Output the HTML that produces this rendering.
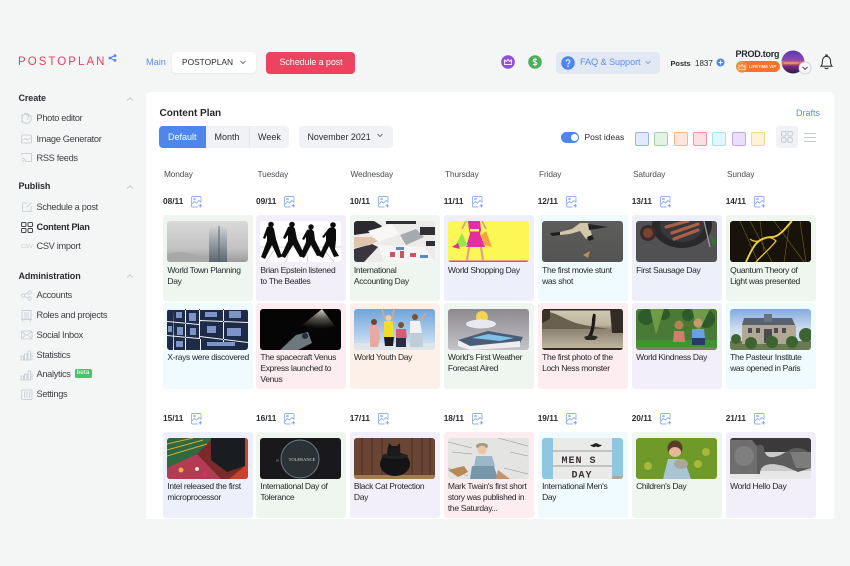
<!DOCTYPE html>
<html><head><meta charset="utf-8">
<style>
html,body{margin:0;padding:0}
body{width:850px;height:566px;background:#f4f5f5;position:relative;overflow:hidden;font-family:"Liberation Sans",sans-serif;color:#2a2c30;font-size:8.5px}
.a{position:absolute;white-space:nowrap;line-height:11px;filter:blur(.2px)}
.panel{position:absolute;left:146px;top:92px;width:688px;height:427px;background:#fff;border-radius:5px 5px 0 0}
.c{position:absolute;width:90px;height:86px;border-radius:3px}
.c svg{position:absolute;left:4px;top:6px;width:81px;height:41px;border-radius:3px;filter:blur(.35px)}
.c p{position:absolute;left:4.4px;top:49.5px;margin:0;line-height:11px;font-size:8.5px;letter-spacing:-.33px;white-space:nowrap;color:#26282c;filter:blur(.2px)}
.g{background:#eef6ef}.p{background:#f3effa}.b{background:#edf0fb}.y{background:#effbfe}.r{background:#fdedf0}.o{background:#fdf0e9}
.d{font-weight:bold;font-size:8.3px;color:#2a2c30}
.w{color:#4a4d52;font-size:8.3px;letter-spacing:-.12px}
.s{font-size:9.2px;letter-spacing:-.3px;color:#3e4146}
.h{font-size:9px;letter-spacing:-.1px;font-weight:bold;color:#2a2c30}
.i{position:absolute}
.sq{position:absolute;top:131.5px;width:12px;height:12px;border-radius:2px;border:1px solid}
</style></head><body>

<div class="a" style="left:18px;top:56px;font-size:11.5px;letter-spacing:2.05px;color:#e8405f;line-height:12px">POSTOPLAN</div>
<svg class="i" style="left:108px;top:54px" width="9" height="9" viewBox="0 0 9 9"><path d="M7 1.5 2 4l5 2.6" stroke="#4f86ec" stroke-width="1" fill="none"/><circle cx="7" cy="1.7" r="1.4" fill="#4f86ec"/><circle cx="2" cy="4" r="1.4" fill="#4f86ec"/><circle cx="7" cy="6.4" r="1.4" fill="#4f86ec"/></svg>
<div class="a" style="left:146px;top:56.5px;color:#5b8def;font-size:9.2px">Main</div>
<div class="i" style="left:172px;top:52px;width:84px;height:21px;background:#fff;border-radius:4px;box-shadow:0 1px 2px #0000000f"></div>
<div class="a" style="left:182px;top:57px;font-size:8.4px;color:#2a2c30">POSTOPLAN</div>
<svg class="i" style="left:239px;top:60px" width="8" height="5" viewBox="0 0 8 5"><path d="M1.5 1 4 3.5 6.5 1" stroke="#555" stroke-width=".8" fill="none"/></svg>
<div class="i" style="left:266px;top:51.5px;width:89px;height:22.5px;background:#ee4260;border-radius:4px"></div>
<div class="a" style="left:279.5px;top:57px;font-size:9px;letter-spacing:-.1px;color:#fff">Schedule a post</div>

<svg class="i" style="left:500.500px;top:55px" width="14" height="14" viewBox="0 0 14 14"><circle cx="7" cy="7" r="6.8" fill="#9150dc"/><path d="M3.6 5 5.300 6.500 7 4.300 8.700 6.500 10.400 5v4.600H3.600z" fill="none" stroke="#fff" stroke-width=".9"/></svg>
<svg class="i" style="left:528px;top:55px" width="14" height="14" viewBox="0 0 14 14"><circle cx="7" cy="7" r="6.800" fill="#4cb05a"/><path d="M9 4.800C8 3.800 5.200 3.900 5.200 5.500 5.200 7.300 9 6.600 9 8.500 9 10.100 6 10.200 5 9.200M7 2.800v8.400" fill="none" stroke="#fff" stroke-width=".9"/></svg>
<div class="i" style="left:556px;top:52px;width:104px;height:21.500px;background:#e3e9f4;border-radius:4px"></div>
<svg class="i" style="left:561px;top:55.500px" width="14" height="14" viewBox="0 0 14 14"><circle cx="7" cy="7" r="6.800" fill="#4f86ec"/><path d="M5.200 5.400C5.300 3.300 8.900 3.400 8.900 5.500 8.900 7 7 7 7 8.500" fill="none" stroke="#fff" stroke-width="1.100"/><circle cx="7" cy="10.300" r=".8" fill="#fff"/></svg>
<div class="a" style="left:580px;top:57px;font-size:9.200px;letter-spacing:-.1px;color:#5b8def">FAQ &amp; Support</div>
<svg class="i" style="left:644px;top:60px" width="8" height="5" viewBox="0 0 8 5"><path d="M1.500 1 4 3.500 6.500 1" stroke="#6f95e0" stroke-width=".8" fill="none"/></svg>
<div class="a" style="left:670.500px;top:57.500px;font-size:7.400px;font-weight:bold;color:#2a2c30">Posts</div>
<div class="a" style="left:695px;top:57.500px;font-size:8px;color:#2a2c30">1837</div>
<svg class="i" style="left:716px;top:58px" width="9" height="9" viewBox="0 0 9 9"><circle cx="4.500" cy="4.500" r="4" fill="#4f86ec"/><path d="M2.400 4.500h4.200M4.500 2.400v4.200" stroke="#fff" stroke-width=".9"/></svg>
<div class="a" style="left:735.500px;top:49px;font-size:9px;letter-spacing:-.25px;font-weight:bold;color:#26282c">PROD.torg</div>
<div class="i" style="left:735.500px;top:60.500px;width:44.500px;height:11.500px;background:#f4752a;border-radius:6px"></div>
<svg class="i" style="left:735.500px;top:60.500px" width="12" height="12" viewBox="0 0 12 12"><circle cx="6" cy="6" r="5.600" fill="#f98a3c"/><path d="M3 4.400 4.600 5.600 6 3.600 7.400 5.600 9 4.400V8.400H3z" fill="none" stroke="#ffe3c8" stroke-width=".8"/></svg>
<div class="a" style="left:749px;top:61px;font-size:4.200px;font-weight:bold;color:#ffe9d8;line-height:11px">LIFETIME VIP</div>
<svg class="i" style="left:781px;top:49.500px" width="24" height="24" viewBox="0 0 24 24"><defs><linearGradient id="av" x1="0" y1="0" x2="0" y2="1"><stop offset="0" stop-color="#5a37b0"/><stop offset=".42" stop-color="#9148b0"/><stop offset=".55" stop-color="#e87a5a"/><stop offset=".68" stop-color="#7a2e80"/><stop offset="1" stop-color="#2c1748"/></linearGradient></defs><circle cx="12" cy="12" r="11.500" fill="url(#av)"/><path d="M3 13h14" stroke="#fbb04a" stroke-width="1"/></svg>
<svg class="i" style="left:798px;top:61px" width="14" height="14" viewBox="0 0 14 14"><circle cx="7" cy="7" r="6" fill="#f4f5f5" stroke="#c9ced6" stroke-width=".8"/><path d="M4.600 6 7 8.400 9.400 6" stroke="#333" stroke-width=".9" fill="none"/></svg>
<svg class="i" style="left:819px;top:53px" width="15" height="18" viewBox="0 0 15 18"><path d="M2 13.200c1.200-1.200 1.400-2.200 1.400-5C3.400 5.500 5 3.400 7.500 3.400S11.600 5.500 11.600 8.200c0 2.800.2 3.800 1.400 5zM6.800 3.300V2h1.400v1.300M5.800 14.600c.4 1.400 3 1.400 3.400 0" fill="none" stroke="#26282c" stroke-width="1"/></svg>

<!-- sidebar -->
<div class="a h" style="left:18.500px;top:93px">Create</div>
<div class="a s" style="left:36.500px;top:113px">Photo editor</div>
<div class="a s" style="left:36.500px;top:133.500px">Image Generator</div>
<div class="a s" style="left:36.500px;top:153px">RSS feeds</div>
<div class="a h" style="left:18.500px;top:181px">Publish</div>
<div class="a s" style="left:36.500px;top:201.500px">Schedule a post</div>
<div class="a s" style="left:36.500px;top:221.500px;font-weight:bold;color:#2a2c30">Content Plan</div>
<div class="a s" style="left:36.500px;top:241px">CSV import</div>
<div class="a h" style="left:18.500px;top:270.500px">Administration</div>
<div class="a s" style="left:36.500px;top:290px">Accounts</div>
<div class="a s" style="left:36.500px;top:310px">Roles and projects</div>
<div class="a s" style="left:36.500px;top:329.500px">Social Inbox</div>
<div class="a s" style="left:36.500px;top:349.500px">Statistics</div>
<div class="a s" style="left:36.500px;top:369px">Analytics</div>
<div class="a" style="left:74.500px;top:369px;width:17px;height:8.500px;background:#4cc26a;border-radius:1.500px;color:#fff;font-size:6.500px;line-height:8px;text-align:center">beta</div>
<div class="a s" style="left:36.500px;top:389px">Settings</div>
<svg class="i" style="left:0;top:0" width="146" height="420" viewBox="0 0 146 420" fill="none" stroke="#c3cad3" stroke-width=".8">
<path d="M127 100.500l3-2.700 3 2.700M127 188.500l3-2.700 3 2.700M127 277.500l3-2.700 3 2.700" stroke="#bfc4ca"/>
<circle cx="26.500" cy="118.500" r="4.800"/><path d="M22 114v9M24 113l5 3-2 4"/>
<rect x="21.500" y="135" width="10" height="8" rx="1"/><path d="M22.500 140.500l2.500-2 2.500 1.500 3-2.500"/>
<path d="M21.500 155v-1.500h10v8h-5M21.500 158a4 4 0 0 1 4 4M21.500 160a2 2 0 0 1 2 2"/>
<path d="M31 206v5.500h-8.500v-8.500h5M26.500 207.500l5-5"/>
<g stroke="#44474c" stroke-width="1"><rect x="21.500" y="222.500" width="4.500" height="4" rx="1"/><rect x="28" y="222.500" width="4.500" height="4" rx="1"/><rect x="21.500" y="228.500" width="4.500" height="4" rx="1"/><rect x="28" y="228.500" width="4.500" height="4" rx="1"/></g>
<circle cx="23" cy="295.500" r="1.700"/><circle cx="29.500" cy="292.500" r="1.700"/><circle cx="29.500" cy="298.500" r="1.700"/><path d="M24.500 294.500l3.500-1.500M24.500 296.500l3.500 1.500"/>
<rect x="22" y="310.500" width="9" height="8.500"/><path d="M21 319.500h11M24 313h5M24 315h5M24 317h5M23 320l-.5 2M30 320l.5 2"/>
<rect x="21.500" y="331" width="10.500" height="8" rx="1"/><path d="M21.500 331.500l5.200 4 5.200-4M21.500 339l3.500-3.500M32 339l-3.500-3.500"/>
<path d="M21 360v-4h2.500v4zM24.500 360v-6h2.500v6zM28 360v-9h2.500v9zM32 360v-7" />
<path d="M21 380v-4h2.500v4zM24.500 380v-6h2.500v6zM28 380v-9h2.500v9zM32 380v-7"/>
<rect x="21.500" y="390" width="10.500" height="9.500" rx="1"/><path d="M24.500 391.500v6.500M27 391.500v6.500M29.700 391.500v6.500"/>
</svg>
<div class="a" style="left:21px;top:241.500px;font-size:5.800px;color:#c3cad3;line-height:10px">CSV</div>

<div class="panel"></div>
<div class="a" style="left:159.500px;top:108px;font-size:10px;font-weight:bold;color:#26282c">Content Plan</div>
<div class="a" style="left:796px;top:107.500px;font-size:9px;color:#5b8def">Drafts</div>
<div class="i" style="left:159px;top:126px;width:130px;height:21.500px;background:#f0f2f5;border-radius:4px"></div>
<div class="i" style="left:159px;top:126px;width:47px;height:21.500px;background:#4f86ec;border-radius:4px 0 0 4px"></div>
<div class="i" style="left:249px;top:126px;width:1px;height:21.500px;background:#e4e6ea"></div>
<div class="a" style="left:168px;top:131.500px;font-size:9px;color:#fff">Default</div>
<div class="a" style="left:214.500px;top:131.500px;font-size:9px">Month</div>
<div class="a" style="left:258px;top:131.500px;font-size:9px">Week</div>
<div class="i" style="left:298.500px;top:126px;width:94.500px;height:21.500px;background:#f0f2f5;border-radius:4px"></div>
<div class="a" style="left:307.500px;top:131.500px;font-size:8.900px">November 2021</div>
<svg class="i" style="left:376px;top:133px" width="8" height="5" viewBox="0 0 8 5"><path d="M1.500 1 4 3.500 6.500 1" stroke="#555" stroke-width=".8" fill="none"/></svg>
<div class="i" style="left:560.500px;top:132px;width:18.500px;height:10.500px;background:#4f86ec;border-radius:6px"></div>
<div class="i" style="left:571px;top:133.800px;width:7px;height:7px;background:#fff;border-radius:50%"></div>
<div class="a" style="left:584.500px;top:131.500px;font-size:8.500px">Post ideas</div>
<div class="sq" style="left:635px;background:#e2e9fa;border-color:#93b4f5"></div>
<div class="sq" style="left:654.300px;background:#e4f2e6;border-color:#9ed4a5"></div>
<div class="sq" style="left:674px;background:#fde7da;border-color:#f8b48a"></div>
<div class="sq" style="left:693px;background:#fcdfe4;border-color:#f593a3"></div>
<div class="sq" style="left:712.300px;background:#e0f8fe;border-color:#9fe4f8"></div>
<div class="sq" style="left:731.500px;background:#eadffa;border-color:#c7a5ef"></div>
<div class="sq" style="left:751px;background:#fdf3d8;border-color:#fad77e"></div>
<div class="i" style="left:776px;top:126px;width:22px;height:22px;background:#f0f2f5;border-radius:3px"></div>
<svg class="i" style="left:780px;top:130px" width="14" height="14" viewBox="0 0 14 14" fill="none" stroke="#c3cad3" stroke-width="1"><rect x="1.500" y="1.500" width="4.500" height="4.500" rx="1"/><rect x="7.800" y="1.500" width="4.500" height="4.500" rx="1"/><rect x="1.500" y="7.800" width="4.500" height="4.500" rx="1"/><rect x="7.800" y="7.800" width="4.500" height="4.500" rx="1"/></svg>
<svg class="i" style="left:804px;top:132px" width="12" height="11" viewBox="0 0 12 11" stroke="#c3cad3" stroke-width="1"><path d="M0 1.500h12M0 5.500h12M0 9.500h12"/></svg>

<div class="a w" style="left:164px;top:168.500px">Monday</div>
<div class="a w" style="left:257.500px;top:168.500px">Tuesday</div>
<div class="a w" style="left:350.500px;top:168.500px">Wednesday</div>
<div class="a w" style="left:445px;top:168.500px">Thursday</div>
<div class="a w" style="left:539px;top:168.500px">Friday</div>
<div class="a w" style="left:633px;top:168.500px">Saturday</div>
<div class="a w" style="left:727px;top:168.500px">Sunday</div>

<div class="a d" style="left:163px;top:196px">08/11</div>
<div class="a d" style="left:256px;top:196px">09/11</div>
<div class="a d" style="left:349.700px;top:196px">10/11</div>
<div class="a d" style="left:443.700px;top:196px">11/11</div>
<div class="a d" style="left:537.700px;top:196px">12/11</div>
<div class="a d" style="left:631.700px;top:196px">13/11</div>
<div class="a d" style="left:725.700px;top:196px">14/11</div>
<div class="a d" style="left:163px;top:413px">15/11</div>
<div class="a d" style="left:256px;top:413px">16/11</div>
<div class="a d" style="left:349.700px;top:413px">17/11</div>
<div class="a d" style="left:443.700px;top:413px">18/11</div>
<div class="a d" style="left:537.700px;top:413px">19/11</div>
<div class="a d" style="left:631.700px;top:413px">20/11</div>
<div class="a d" style="left:725.700px;top:413px">21/11</div>

<svg class="i" style="left:0;top:0" width="850" height="566" viewBox="0 0 850 566" fill="none" stroke="#8fb0f0" stroke-width=".9">
<defs><g id="ad"><path d="M6.500 11H1.500a1 1 0 0 1-1-1V1.500a1 1 0 0 1 1-1h7.500a1 1 0 0 1 1 1V6.500M1 8l2.500-2.500L5.500 7 8 4.500l2 1.800"/><circle cx="3.500" cy="3" r=".8"/><path d="M9.300 8v3.500M7.500 9.800h3.600" stroke="#6f9bee"/></g></defs>
<use href="#ad" x="191" y="196"/><use href="#ad" x="284" y="196"/><use href="#ad" x="378" y="196"/><use href="#ad" x="472" y="196"/><use href="#ad" x="566" y="196"/><use href="#ad" x="660" y="196"/><use href="#ad" x="754" y="196"/>
<use href="#ad" x="191" y="413"/><use href="#ad" x="284" y="413"/><use href="#ad" x="378" y="413"/><use href="#ad" x="472" y="413"/><use href="#ad" x="566" y="413"/><use href="#ad" x="660" y="413"/><use href="#ad" x="754" y="413"/>
</svg>

<!-- Row 1 -->
<div class="c g" style="left:163px;top:215px"><svg viewBox="0 0 81 41"><defs><linearGradient id="f1" x1="0" y1="0" x2="0" y2="1"><stop offset="0" stop-color="#d9d9d9"/><stop offset=".7" stop-color="#c0c0c0"/><stop offset="1" stop-color="#9a9a9a"/></linearGradient><linearGradient id="f2" x1="0" y1="0" x2="0" y2="1"><stop offset="0" stop-color="#d2d3d4"/><stop offset=".35" stop-color="#a4abb0"/><stop offset="1" stop-color="#5a666f"/></linearGradient></defs><rect width="81" height="41" fill="url(#f1)"/><path d="M42 8 52 5 60 8V41H42z" fill="url(#f2)"/><path d="M52 5V41" stroke="#4a555e" stroke-width=".8"/><path d="M0 33c15-5 28 1 42 5V41H0z" fill="#a8a8a8"/></svg><p>World Town Planning<br>Day</p></div>
<div class="c p" style="left:256px;top:215px"><svg viewBox="0 0 81 41"><rect width="81" height="41" fill="#fff"/><path d="M0 26h81M6 41l10-15M26 41l4-15M48 41l-2-15M74 41l-12-15" stroke="#b5b5b5" stroke-width=".6"/><g fill="#0c0c0c"><circle cx="11" cy="3.500" r="2.800"/><path d="M7 6c3-1 6-1 7 2l2 10 5 15 3 2-6 2-6-13-7 14-4-2 6-16 0-6-2 4-2-1z"/><circle cx="32" cy="3.500" r="2.800"/><path d="M28 6c3-1 6-1 7 2l2 10 7 15 2 2-6 1-7-12-8 13-4-2 7-15 0-6-3 4-2-1z"/><circle cx="51" cy="6" r="2.700"/><path d="M47 9c3-1 6-1 7 2l1 8 6 12 2 3-6 1-6-11-7 13-4-2 6-14 0-5-2 3-2-1z"/><circle cx="73" cy="4" r="2.800"/><path d="M69 7c3-1 6-1 7 2l0 10-1 9 4 7-5 1-5-11-6 12-4-2 7-15 0-6-2 3-2-1z"/></g></svg><p>Brian Epstein listened<br>to The Beatles</p></div>
<div class="c g" style="left:349.500px;top:215px"><svg viewBox="0 0 81 41"><rect width="81" height="41" fill="#ecebe9"/><path d="M0 0h20l8 5-6 6-22 3z" fill="#2a2a2e"/><path d="M0 28l18-5 6 3-14 15H0z" fill="#38363c"/><path d="M14 10l24-7 8 10-22 8z" fill="#f8f7f6"/><path d="M46 14l16-6 8 8-18 8z" fill="#a6a9ad"/><path d="M0 16h18l6 4-8 4-16 3z" fill="#e0c4b0"/><path d="M24 24l46 2 11 15H30z" fill="#f6f5f6"/><path d="M36 31h5v5h-5zM46 30h4v7h-4zM56 32h6v4h-6z" fill="#c95565"/><path d="M42 26h8v3h-8zM66 34h8v3h-8z" fill="#5a8ac0"/><path d="M32 0h30v3H32zM66 6h15v8H66zM72 20h9v5h-9z" fill="#303034"/></svg><p>International<br>Accounting Day</p></div>
<div class="c b" style="left:443.500px;top:215px"><svg viewBox="0 0 81 41"><rect width="81" height="41" fill="#fdf756"/><rect y="39.500" width="81" height="1.500" fill="#e63ca5"/><path d="M20 0h12l1 9-1 4 5 13H18l4-13-1-4z" fill="#e62da0"/><path d="M22 8h9v2.500h-9z" fill="#fff15a"/><path d="M6 27 14 12l6 13z" fill="#9be64b"/><path d="M36 24 44 26 38 10 33 14z" fill="#f4a540"/><path d="M4 26l8 2-2-6z" fill="#e62da0"/><path d="M21 26l-2 13M33 26l2 13" stroke="#d9a782" stroke-width="2.200"/><path d="M18 0l-4 8M34 0l4 8" stroke="#d9a782" stroke-width="1.800"/></svg><p>World Shopping Day</p></div>
<div class="c y" style="left:537.700px;top:215px"><svg viewBox="0 0 81 41"><defs><linearGradient id="m1" x1="0" y1="0" x2="0" y2="1"><stop offset="0" stop-color="#5d5d5c"/><stop offset="1" stop-color="#545453"/></linearGradient></defs><rect width="81" height="41" fill="url(#m1)"/><path d="M18 11 30 8 38 2 46 2 50 14 44 18 38 10 28 13 18 14z" fill="#d5c8aa"/><path d="M46 3 66 6 47 9z" fill="#222226"/><path d="M8 12 18 11 18 14 10 15zM45 16l5-2 2 4-5 2z" fill="#1d1d20"/><path d="M41 34l7-4-2 7z" fill="#b8905a"/></svg><p>The first movie stunt<br>was shot</p></div>
<div class="c b" style="left:631.700px;top:215px"><svg viewBox="0 0 81 41"><rect width="81" height="41" fill="#515154"/><ellipse cx="46" cy="4" rx="30" ry="23" fill="#29292c"/><ellipse cx="46" cy="4" rx="22" ry="17" fill="#38383b"/><circle cx="12" cy="12" r="8" fill="#3a2a28"/><circle cx="12" cy="12" r="5" fill="#7a4232"/><g stroke="#ab6045" stroke-width="3.200" stroke-linecap="round"><path d="M30 6 52 0"/><path d="M36 12 62 3"/><path d="M38 18 62 9"/></g><path d="M68 0l6 26" stroke="#a0a0a0" stroke-width="1.200"/><path d="M74 14l7 6-4 6z" fill="#3d6b3a"/></svg><p>First Sausage Day</p></div>
<div class="c g" style="left:725.700px;top:215px"><svg viewBox="0 0 81 41"><rect width="81" height="41" fill="#17120a"/><g stroke="#7a6420" stroke-width=".6"><path d="M10 0l18 41M20 0l22 41M30 0l4 30M60 0l-6 41M70 0l6 41M44 0l30 41"/></g><path d="M16 41C22 28 26 16 42 16 50 16 58 4 62 0" stroke="#f5d840" stroke-width="1.800" fill="none"/><path d="M20 18C30 26 36 10 46 20 40 28 30 36 26 41" stroke="#e8c531" stroke-width="1.300" fill="none"/></svg><p>Quantum Theory of<br>Light was presented</p></div>

<!-- Row 2 -->
<div class="c y" style="left:163px;top:302.700px"><svg viewBox="0 0 81 41"><rect width="81" height="41" fill="#1d2a48"/><g fill="#f2f3f6"><path d="M0 0h81v1H0zM6 0l1 41H6zM18 0v41h1V0zM32 0v30h1V0zM56 0v33h1V0zM0 12 32 15v1L0 13zM33 11 81 13v1L33 12zM0 26l32 3v1L0 27zM33 27 81 33v1L33 28zM33 30v11h1V30z"/></g><g fill="#7d95c6"><path d="M9 3h6v6H9zM22 4h7v8h-7zM38 3h12v5H38zM62 2h12v7H62zM60 19h14v8H60zM40 17h9v7h-9zM40 33h28v4H40zM10 18h6v8h-6zM23 19h6v7h-6zM1 17h4v6H1zM9 32h7v6H9z"/></g></svg><p>X-rays were discovered</p></div>
<div class="c r" style="left:256px;top:302.700px"><svg viewBox="0 0 81 41"><defs><radialGradient id="v1" cx=".6" cy="0" r=".75"><stop offset="0" stop-color="#dcd6c6"/><stop offset=".5" stop-color="#55524c"/><stop offset="1" stop-color="#050505"/></radialGradient></defs><rect width="81" height="41" fill="#050505"/><path d="M62 0 30 26 82 26z" fill="url(#v1)"/><path d="M20 41 36 26 48 23 52 34 38 41z" fill="#6c787c"/><circle cx="45" cy="27" r="3" fill="#263034"/></svg><p>The spacecraft Venus<br>Express launched to<br>Venus</p></div>
<div class="c o" style="left:349.500px;top:302.700px"><svg viewBox="0 0 81 41"><defs><linearGradient id="s1" x1="0" y1="0" x2="0" y2="1"><stop offset="0" stop-color="#6fa4da"/><stop offset="1" stop-color="#dceaf6"/></linearGradient></defs><rect width="81" height="41" fill="url(#s1)"/><rect y="34" width="81" height="7" fill="#dfe6ea"/><path d="M16 16h8l2 13-2 9h-8z" fill="#e8a9a5"/><circle cx="20" cy="13" r="3" fill="#6a4634"/><path d="M30 12h9l1 16H30z" fill="#efdc2e"/><path d="M30 28h10l-1 9H31z" fill="#1e1e20"/><circle cx="34.500" cy="9" r="3" fill="#e8d0b0"/><path d="M31 10 28 0M38 10 40 0" stroke="#d7a98f" stroke-width="1.500"/><path d="M42 20h10l1 9H42z" fill="#d85c78"/><path d="M42 29h10v9H42z" fill="#263044"/><circle cx="47" cy="16" r="3" fill="#7b5136"/><path d="M56 12h10l2 12H56z" fill="#f1f1f1"/><path d="M56 24h12l1 14H56z" fill="#c0ccd8"/><circle cx="61" cy="8" r="3" fill="#7b5136"/><path d="M66 12 72 4" stroke="#d7a98f" stroke-width="1.500"/></svg><p>World Youth Day</p></div>
<div class="c g" style="left:443.500px;top:302.700px"><svg viewBox="0 0 81 41"><defs><linearGradient id="w1" x1="0" y1="0" x2="0" y2="1"><stop offset="0" stop-color="#8d8b90"/><stop offset="1" stop-color="#c4c3c7"/></linearGradient></defs><rect width="81" height="41" fill="url(#w1)"/><circle cx="34" cy="8" r="6" fill="#f3d352"/><ellipse cx="33" cy="15" rx="15" ry="4.500" fill="#e8e8ee"/><path d="M10 31 40 22 75 28 72 34 22 38z" fill="#4a5c76"/><path d="M24 29 40 25 66 29 52 32z" fill="#7fc0e8"/><path d="M10 31v6l12 4 50-3v-6L22 37z" fill="#eeeef0"/></svg><p>World's First Weather<br>Forecast Aired</p></div>
<div class="c r" style="left:537.700px;top:302.700px"><svg viewBox="0 0 81 41"><defs><linearGradient id="l1" x1="0" y1="0" x2="0" y2="1"><stop offset="0" stop-color="#d2cab4"/><stop offset=".38" stop-color="#c0b6a0"/><stop offset=".5" stop-color="#8c8272"/><stop offset="1" stop-color="#c4bba4"/></linearGradient></defs><rect width="81" height="41" fill="url(#l1)"/><path d="M0 2C12 2 22 10 34 14 44 17 56 18 66 20H0z" fill="#6a6050"/><path d="M68 0h13v24H70z" fill="#332c24"/><path d="M0 0h8v10L0 14z" fill="#3a3228"/><path d="M51 5c3-1 3 2 2.500 4-.5 6-1 12-3.500 18h-4c3-5 4-12 4-17z" fill="#1e1a14"/><path d="M42 28c4-2 10-2 14 0l-3 3H44z" fill="#2c2820"/><rect x="0" y="0" width="81" height="1.500" fill="#2e2a22"/><rect y="39" width="81" height="2" fill="#2e2a22"/></svg><p>The first photo of the<br>Loch Ness monster</p></div>
<div class="c p" style="left:631.700px;top:302.700px"><svg viewBox="0 0 81 41"><rect width="81" height="41" fill="#4a7a35"/><g fill="#2f5a2a"><circle cx="10" cy="8" r="8"/><circle cx="28" cy="5" r="6"/><circle cx="70" cy="10" r="9"/><circle cx="52" cy="6" r="6"/></g><path d="M14 0 20 26 28 0zM56 0l6 24L74 0z" fill="#6f9a4a"/><rect y="31" width="81" height="7" fill="#3d9530"/><rect y="38" width="81" height="3" fill="#8a7a5e"/><circle cx="43" cy="16" r="4.500" fill="#b08550"/><path d="M38 22h10l1 11H37z" fill="#d87a6a"/><circle cx="62" cy="14" r="4.500" fill="#c89870"/><path d="M56 20h12l1 9H56z" fill="#6aa0dc"/><path d="M56 29h13v7H56z" fill="#28396e"/></svg><p>World Kindness Day</p></div>
<div class="c y" style="left:725.700px;top:302.700px"><svg viewBox="0 0 81 41"><defs><linearGradient id="p1" x1="0" y1="0" x2="0" y2="1"><stop offset="0" stop-color="#84aae0"/><stop offset=".5" stop-color="#cfdff0"/></linearGradient></defs><rect width="81" height="41" fill="url(#p1)"/><rect y="32" width="81" height="9" fill="#6a7a52"/><path d="M16 9h44l6 8v18H12V17z" fill="#b0a894"/><path d="M14 9h48l3 7H12z" fill="#5a6272"/><rect x="34" y="5" width="8" height="8" fill="#6a7282"/><g fill="#4a4a50"><path d="M18 19h4v5h-4zM26 19h4v5h-4zM44 19h4v5h-4zM52 19h4v5h-4zM34 20h8v14h-8z"/></g><g fill="#3d6430"><circle cx="21" cy="34" r="6"/><circle cx="42" cy="33" r="6"/><circle cx="62" cy="33" r="6"/><circle cx="76" cy="26" r="7"/><circle cx="6" cy="30" r="5"/></g></svg><p>The Pasteur Institute<br>was opened in Paris</p></div>

<!-- Row 3 -->
<div class="c b" style="left:163px;top:431.700px"><svg viewBox="0 0 81 41"><rect width="81" height="41" fill="#7a2a28"/><path d="M0 0h46L30 16 0 30z" fill="#2e6a40"/><path d="M0 6 26 0M0 12 36 2M0 18 40 6" stroke="#d9a83a" stroke-width="1"/><path d="M0 30 30 16 54 41H0z" fill="#b33b54"/><circle cx="14" cy="32" r="2.500" fill="#e9b23a"/><circle cx="30" cy="31" r="2" fill="#e8e0d0"/><circle cx="38" cy="36" r="2.500" fill="#d83060"/><path d="M44 0H78V28L60 34 44 22z" fill="#191d22"/><path d="M78 0h3v41H62l16-13z" fill="#c7432c"/></svg><p>Intel released the first<br>microprocessor</p></div>
<div class="c g" style="left:256px;top:431.700px"><svg viewBox="0 0 81 41"><rect width="81" height="41" fill="#19191b"/><circle cx="40" cy="21" r="19" fill="#2a3236" stroke="#6c7e82" stroke-width="1"/><text x="42" y="23" text-anchor="middle" fill="#d7d2c8" font-size="4.500" font-family="Liberation Serif,serif">TOLERANCE</text><text x="16" y="23.500" fill="#a8a49c" font-size="3" font-family="Liberation Serif,serif">IN</text></svg><p>International Day of<br>Tolerance</p></div>
<div class="c p" style="left:349.500px;top:431.700px"><svg viewBox="0 0 81 41"><rect width="81" height="41" fill="#6b4534"/><g stroke="#4a2f24" stroke-width="1"><path d="M8 0v38M18 0v38M28 0v38M58 0v38M68 0v38M76 0v38"/></g><rect y="37" width="81" height="4" fill="#a27b4f"/><ellipse cx="41" cy="26" rx="15" ry="12" fill="#141416"/><ellipse cx="41" cy="18" rx="13" ry="3" fill="#222226"/><path d="M34 18c-2-4 0-8 1-13l3 3h5l3-3c0 5 1 10-1 13z" fill="#1a1a1d"/></svg><p>Black Cat Protection<br>Day</p></div>
<div class="c r" style="left:443.500px;top:431.700px"><svg viewBox="0 0 81 41"><rect width="81" height="41" fill="#e4e4e2"/><g stroke="#8c8c8c" stroke-width=".5"><path d="M0 4l24 6M4 14l20 2M50 0l30 8M62 14l18 4M56 30l24 6M0 30l20 8"/></g><ellipse cx="34" cy="8" rx="6" ry="3" fill="#a09a7a"/><circle cx="34" cy="12" r="4.500" fill="#e8c6a6"/><path d="M28 18h16l3 10H26z" fill="#9cb8c8"/><path d="M24 28 46 28 50 41H22z" fill="#7696ac"/><path d="M0 32l16-4 4 6-10 5z" fill="#b58a54"/><path d="M50 32l12 9H48z" fill="#c6926a"/></svg><p>Mark Twain's first short<br>story was published in<br>the Saturday...</p></div>
<div class="c y" style="left:537.700px;top:431.700px"><svg viewBox="0 0 81 41"><rect width="81" height="41" fill="#8fc7e0"/><rect x="11" width="59" height="41" fill="#eaeae8"/><rect x="11" y="12" width="59" height="2" fill="#c2c2c0"/><rect x="11" y="27" width="59" height="2" fill="#c2c2c0"/><path d="M48 7c3 0 5-2 6-2 1 0 3 2 6 2-2 2-5 3-6 1-1 2-4 1-6-1z" fill="#222"/><text x="37" y="25" text-anchor="middle" font-family="Liberation Mono,monospace" font-weight="bold" font-size="10" letter-spacing="1" fill="#3a3238">MEN S</text><text x="40" y="39.500" text-anchor="middle" font-family="Liberation Mono,monospace" font-weight="bold" font-size="10" letter-spacing="1" fill="#3a3238">DAY</text><rect x="70" y="38" width="11" height="3" fill="#b0a894"/></svg><p>International Men's<br>Day</p></div>
<div class="c g" style="left:631.700px;top:431.700px"><svg viewBox="0 0 81 41"><rect width="81" height="41" fill="#6f9a2a"/><g fill="#a8b83a"><circle cx="12" cy="28" r="4"/><circle cx="62" cy="26" r="4"/><circle cx="70" cy="14" r="4"/></g><circle cx="39" cy="10" r="7.500" fill="#5a3c28"/><ellipse cx="39" cy="14" rx="6" ry="5" fill="#e5b89c"/><path d="M27 41 32 21h16l7 20z" fill="#aac4d4"/><ellipse cx="45" cy="26" rx="7" ry="5" fill="#a8a6a0"/></svg><p>Children's Day</p></div>
<div class="c p" style="left:725.700px;top:431.700px"><svg viewBox="0 0 81 41"><rect width="81" height="41" fill="#c9c9c9"/><rect width="81" height="14" fill="#3a3a3a"/><rect y="33" width="81" height="8" fill="#e6e6e6"/><path d="M0 2h22l8 10-3 24H0z" fill="#6e6e6e"/><circle cx="14" cy="18" r="10" fill="#7e7e7e"/><path d="M27 36V8c2-2 6-2 7 2 1 8 4 11 14 8 6-2 12-8 18-8 8 0 15 4 15 10v10L68 34 54 28 44 26C36 26 30 28 30 36z" fill="#5c5c5c"/><path d="M60 14h21v16H66z" fill="#7c7c7c"/></svg><p>World Hello Day</p></div>

</body></html>
